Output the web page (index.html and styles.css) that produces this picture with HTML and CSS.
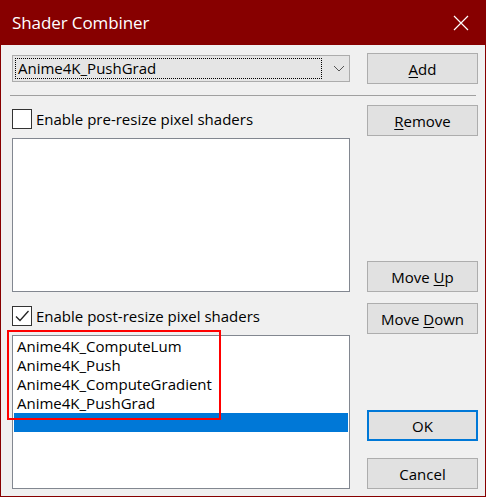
FILE: index.html
```html
<!DOCTYPE html>
<html>
<head>
<meta charset="utf-8">
<link rel="stylesheet" href="styles.css">
</head>
<body>
<div class="window">
  <div class="titlebar">
    <span class="title">Shader Combiner</span>
    <svg class="close" width="16" height="16" viewBox="0 0 16 16"><path d="M1 1 L15 15 M15 1 L1 15" stroke="#fff" stroke-width="1.2" fill="none"/></svg>
  </div>
  <div class="client">
    <div class="toprow">
      <div class="combo">
        <div class="combo-focus">Anime4K_PushGrad</div>
        <svg class="chev" width="12" height="7" viewBox="0 0 12 7"><path d="M1 1 L6 6 L11 1" stroke="#555" stroke-width="1" fill="none"/></svg>
      </div>
      <div class="btn btn-add"><span><u>A</u>dd</span></div>
    </div>
    <div class="sep"></div>
    <div class="main">
      <div class="left">
        <label class="check check-pre"><span class="box"></span><span>Enable pre-resize pixel shaders</span></label>
        <div class="list list-pre"></div>
        <label class="check check-post"><span class="box"><svg width="18" height="18" viewBox="0 0 18 18"><path d="M3 9.5 L7 13.5 L15.5 4" stroke="#222" stroke-width="1.3" fill="none"/></svg></span><span>Enable post-resize pixel shaders</span></label>
        <div class="list list-post">
          <div class="item">Anime4K_ComputeLum</div>
          <div class="item">Anime4K_Push</div>
          <div class="item">Anime4K_ComputeGradient</div>
          <div class="item">Anime4K_PushGrad</div>
          <div class="item selected"></div>
        </div>
      </div>
      <div class="right">
        <div class="btn btn-remove"><span><u>R</u>emove</span></div>
        <div class="btn btn-up"><span>Move <u>U</u>p</span></div>
        <div class="btn btn-down"><span>Move <u>D</u>own</span></div>
        <div class="btn btn-ok default"><span>OK</span></div>
        <div class="btn btn-cancel"><span>Cancel</span></div>
      </div>
    </div>
    <div class="annotation"></div>
  </div>
</div>
</body>
</html>
```

FILE: styles.css
```css
* { box-sizing: border-box; }
html, body { margin: 0; padding: 0; background: #f0f0f0; }
body { font-family: "Open Sans", "Noto Sans", sans-serif; font-size: 15px; color: #000; }

.window {
  position: relative;
  width: 486px;
  height: 497px;
  background: #f0f0f0;
  border: 1px solid #870000;
  border-top: none;
  overflow: hidden;
}
.titlebar {
  height: 45px;
  margin: 0 -1px;
  background: #870000;
  color: #fff;
  display: flex;
  align-items: center;
  justify-content: space-between;
  padding: 0 17px 0 12px;
}
.title { font-size: 17px; letter-spacing: -0.1px; margin-top: -1px; }
.close { display: block; }

.client { position: relative; }
.toprow {
  display: flex;
  align-items: center;
  padding: 8px 0 0 11px;
}
.combo {
  width: 338px;
  height: 27px;
  background: #e5e5e5;
  border: 1px solid #acacac;
  display: flex;
  align-items: center;
  padding: 2px;
}
.combo-focus {
  width: 307px;
  height: 21px;
  border: 1px dotted #000;
  line-height: 19px;
  padding-left: 2px;
}
.chev { margin-left: 11px; }

.btn {
  width: 111px;
  height: 31px;
  background: #e1e1e1;
  border: 1px solid #adadad;
  display: flex;
  align-items: center;
  justify-content: center;
}
.btn u { text-decoration-thickness: 1px; text-underline-offset: 2px; }
.btn-add { margin-left: 17px; }
.default { border: 2px solid #0078d7; }

.sep {
  margin: 11px 0 0 9px;
  width: 466px;
  height: 1px;
  background: #a0a0a0;
}

.main {
  display: flex;
  padding-left: 11px;
}
.left { width: 338px; display: flex; flex-direction: column; }
.right { margin-left: 17px; display: flex; flex-direction: column; }

.check {
  display: flex;
  align-items: center;
  height: 20px;
}
.check-pre { margin-top: 13px; }
.check-post { margin-top: 14px; }
.box {
  width: 20px;
  height: 20px;
  border: 1px solid #333;
  background: #fff;
  margin-right: 4px;
  display: flex;
  align-items: center;
  justify-content: center;
}
.box svg { display: block; }

.list {
  background: #fff;
  border: 1px solid #828790;
  height: 154px;
  margin-top: 9px;
}
.list-post { padding-top: 1px; }
.item {
  height: 19px;
  line-height: 19px;
  margin: 0 1px;
  padding-left: 3px;
}
.item.selected { background: #0078d7; }

.btn-remove { margin-top: 9px; }
.btn-up { margin-top: 125px; }
.btn-down { margin-top: 11px; }
.btn-ok { margin-top: 76px; }
.btn-cancel { margin-top: 17px; }

.annotation {
  position: absolute;
  left: 6px;
  top: 285px;
  width: 214px;
  height: 90px;
  border: 2px solid #f00;
  pointer-events: none;
}
```
